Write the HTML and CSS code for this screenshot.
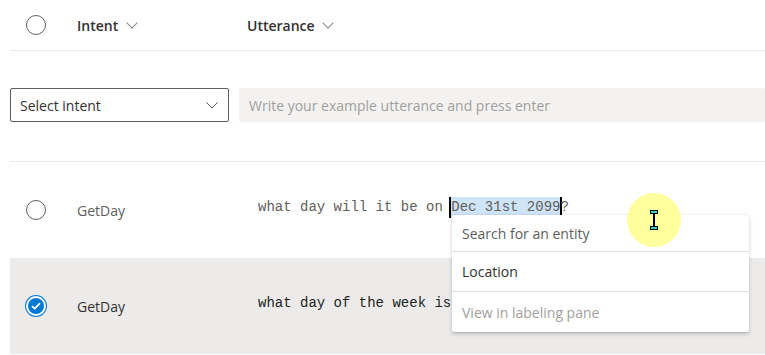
FILE: index.html
```html
<!DOCTYPE html>
<html lang="en">
<head>
  <meta charset="UTF-8">
  <meta name="viewport" content="width=device-width, initial-scale=1.0">
  <title>Utterances</title>
  <link rel="stylesheet" href="styles.css">
</head>
<body>

  <div class="list">
    <div class="header">
      <div class="col-check"><span class="radio"></span></div>
      <div class="col-intent">Intent <span class="chev"></span></div>
      <div class="col-utt">Utterance <span class="chev"></span></div>
    </div>

    <div class="composer">
      <div class="select">
        <span>Select intent</span>
        <svg class="select-chev" width="12" height="7" viewBox="0 0 12 7"><path d="M0.5 0.5 L6 6 L11.5 0.5" fill="none" stroke="#605e5c" stroke-width="1"/></svg>
      </div>
      <div class="utt-input">Write your example utterance and press enter</div>
    </div>

    <div class="row">
      <div class="col-check"><span class="radio"></span></div>
      <div class="col-intent intent-name">GetDay</div>
      <div class="col-utt"><span class="mono">what day will it be on <span class="sel">Dec 31st 2099</span>?</span></div>
    </div>

    <div class="row selected">
      <div class="col-check">
        <span class="radio checked">
          <svg width="10" height="8" viewBox="0 0 10 8"><path d="M1 4.2 L3.7 6.6 L9 1.2" fill="none" stroke="#fff" stroke-width="1.8"/></svg>
        </span>
      </div>
      <div class="col-intent intent-name">GetDay</div>
      <div class="col-utt"><span class="mono">what day of the week is</span></div>
    </div>

    <div class="menu">
      <div class="menu-item search">Search for an entity</div>
      <div class="menu-item">Location</div>
      <div class="menu-item disabled">View in labeling pane</div>
    </div>

    <div class="spot">
      <span class="ibeam"></span>
    </div>
  </div>

</body>
</html>
```

FILE: styles.css
```css
body {
  margin: 0;
  font-family: "Open Sans", "Noto Sans", sans-serif;
  font-size: 14px;
  color: #323130;
  background: #fff;
  overflow: hidden;
}
.list {
  position: relative;
  padding-left: 10px;
  height: 355px;
}
.header {
  display: flex;
  align-items: center;
  height: 50px;
  border-bottom: 1px solid #edebe9;
}
.header .col-intent, .header .col-utt {
  font-weight: 600;
  color: #323130;
}
.col-check {
  width: 52px;
  display: flex;
  justify-content: center;
}
.col-intent {
  width: 170px;
  padding-left: 15px;
}
.col-utt {
  flex: 1;
}
.chev {
  display: inline-block;
  width: 7px;
  height: 7px;
  border-right: 1px solid #8a8886;
  border-bottom: 1px solid #8a8886;
  transform: rotate(45deg);
  margin: 0 0 4px 6px;
}
.radio {
  width: 18px;
  height: 18px;
  border: 1px solid #605e5c;
  border-radius: 50%;
  display: flex;
  align-items: center;
  justify-content: center;
}
.radio.checked {
  background: #0078d4;
  border-color: #fff;
  box-shadow: 0 0 0 1px #0078d4;
  width: 16px;
  height: 16px;
  border-width: 2px;
}
.composer {
  display: flex;
  gap: 10px;
  padding: 37px 0 39px;
  border-bottom: 1px solid #edebe9;
}
.select {
  width: 219px;
  height: 34px;
  border: 1px solid #605e5c;
  border-radius: 2px;
  display: flex;
  align-items: center;
  justify-content: space-between;
  padding: 0 9px;
  box-sizing: border-box;
}
.select-chev {
  margin-right: 1px;
}
.utt-input {
  flex: 1;
  height: 34px;
  background: #f3f2f1;
  border-radius: 2px;
  color: #a19f9d;
  display: flex;
  align-items: center;
  padding-left: 10px;
}
.row {
  display: flex;
  align-items: center;
  height: 96px;
}
.row.selected {
  background: #edebe9;
}
.intent-name {
  color: #605e5c;
}
.row.selected .intent-name {
  color: #323130;
}
.row .col-utt {
  padding-left: 11px;
  margin-top: -9px;
}
.mono {
  font-family: "Liberation Mono", monospace;
  font-size: 14px;
  color: #605e5c;
  white-space: pre;
}
.row.selected .mono {
  color: #201f1e;
}
.sel {
  background: #cfe4f7;
  border-left: 2px solid #000;
  border-right: 2px solid #000;
  margin: 0 -2px;
  padding: 2px 0 3px;
}
.menu {
  position: absolute;
  left: 452px;
  top: 215px;
  width: 297px;
  background: #fff;
  border-radius: 2px;
  box-shadow: 0 1.6px 4px rgba(0, 0, 0, 0.18), 0 0.3px 1px rgba(0, 0, 0, 0.12);
}
.menu-item {
  height: 39px;
  display: flex;
  align-items: center;
  padding-left: 10px;
  border-top: 1px solid #e1dfdd;
  color: #323130;
}
.menu-item.search {
  height: 36px;
  border-top: none;
  color: #605e5c;
}
.menu-item.disabled {
  height: 40px;
  color: #a19f9d;
}
.spot {
  position: absolute;
  left: 627px;
  top: 193px;
  width: 54px;
  height: 54px;
  border-radius: 50%;
  background: rgba(255, 255, 120, 0.72);
  display: flex;
  align-items: center;
  justify-content: center;
}
.ibeam {
  width: 2px;
  height: 14px;
  background: #000;
  position: relative;
}
.ibeam::before, .ibeam::after {
  content: "";
  position: absolute;
  left: -3px;
  width: 6px;
  height: 2px;
  background: #2fd3c0;
  border: 1px solid #000;
}
.ibeam::before { top: -3px; }
.ibeam::after { bottom: -3px; }
```
